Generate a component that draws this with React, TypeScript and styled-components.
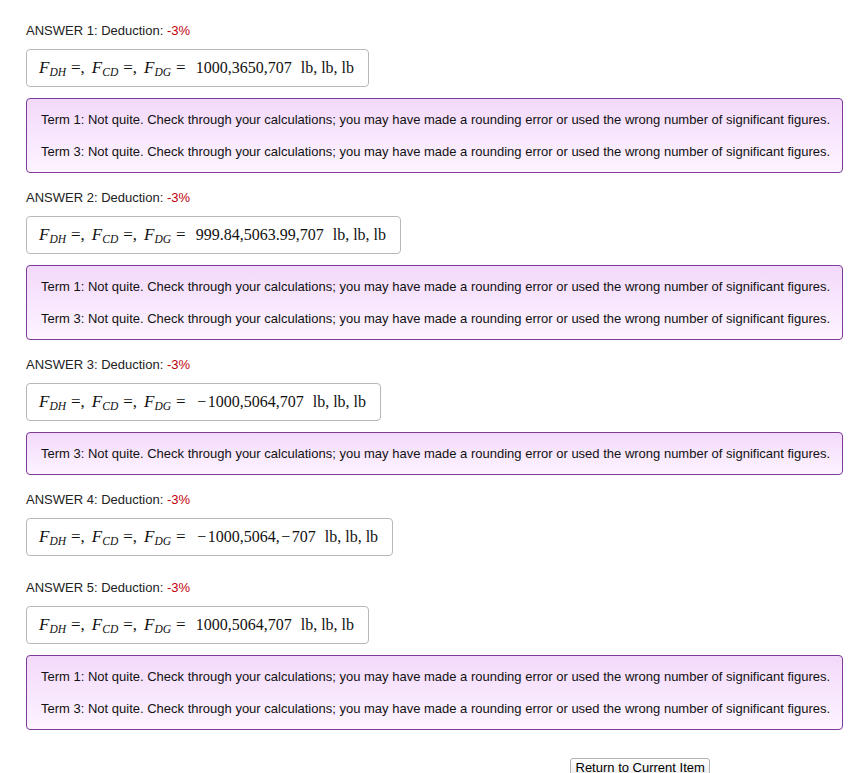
import React from "react";
import styled, { createGlobalStyle } from "styled-components";

type Answer = {
  id: number;
  value: React.ReactNode;
  terms: number[];
};

const Global = createGlobalStyle`
  body {
    margin: 0;
    background: #ffffff;
    font-family: "Liberation Sans", Arial, sans-serif;
  }
`;

const Page = styled.div`
  padding: 23px 18px 0 26px;
  display: flex;
  flex-direction: column;
  gap: 13px;
`;

const Block = styled.section`
  display: flex;
  flex-direction: column;
  align-items: flex-start;
`;

const Label = styled.div`
  font-size: 13px;
  line-height: 16px;
  color: #222;
  margin-bottom: 10px;
`;

const Deduction = styled.span`
  color: #c0000b;
`;

const AnswerBox = styled.div`
  border: 1px solid #b8b8b8;
  border-radius: 4px;
  padding: 8px 14px 8px 12px;
  margin-bottom: 11px;
  font-family: "Liberation Serif", "DejaVu Serif", serif;
  font-size: 17px;
  line-height: 20px;
  height: 20px;
  color: #111;
  white-space: nowrap;
`;

const Var = styled.span`
  font-style: italic;
`;

const Sub = styled.sub`
  font-size: 11.5px;
  font-style: italic;
  vertical-align: -3px;
  line-height: 0;
`;

const Op = styled.span`
  margin-left: 5px;
`;

const Sep = styled.span`
  margin-right: 7px;
`;

const Value = styled.span`
  font-size: 16px;
  margin-left: 10px;
`;

const Minus = styled.span`
  margin: 0 1.5px;
`;

const Unit = styled.span`
  font-size: 16px;
  margin-left: 9px;
`;

const Feedback = styled.div`
  align-self: stretch;
  display: flex;
  flex-direction: column;
  gap: 14px;
  padding: 12px 12px 11px 14px;
  margin-bottom: 4px;
  border: 1px solid #7d3c98;
  border-radius: 4px;
  background: linear-gradient(#f3d9fb, #fdf4ff);
  font-size: 13px;
  line-height: 18px;
  color: #111;
  white-space: nowrap;
`;

const Footer = styled.div`
  display: flex;
  padding: 24px 0 0 570px;
`;

const ReturnButton = styled.button`
  font-family: "Liberation Sans", Arial, sans-serif;
  font-size: 13px;
  line-height: 17px;
  padding: 0 4.5px;
  color: #000;
  background: linear-gradient(#ffffff, #ededed);
  border: 1px solid #b4b4b4;
  border-radius: 3px;
`;

const Neg = () => <Minus>&minus;</Minus>;

const Term = ({ sub, last }: { sub: string; last?: boolean }) => (
  <>
    <Var>F</Var>
    <Sub>{sub}</Sub>
    <Op>=</Op>
    {!last && <Sep>,</Sep>}
  </>
);

const Expr = ({ v }: { v: React.ReactNode }) => (
  <>
    <Term sub="DH" />
    <Term sub="CD" />
    <Term sub="DG" last />
    <Value>{v}</Value>
    <Unit>lb, lb, lb</Unit>
  </>
);

const answers: Answer[] = [
  { id: 1, value: "1000,3650,707", terms: [1, 3] },
  { id: 2, value: "999.84,5063.99,707", terms: [1, 3] },
  {
    id: 3,
    value: (
      <>
        <Neg />
        1000,5064,707
      </>
    ),
    terms: [3],
  },
  {
    id: 4,
    value: (
      <>
        <Neg />
        1000,5064,
        <Neg />
        707
      </>
    ),
    terms: [],
  },
  { id: 5, value: "1000,5064,707", terms: [1, 3] },
];

const message =
  "Not quite. Check through your calculations; you may have made a rounding error or used the wrong number of significant figures.";

export default function App() {
  return (
    <>
      <Global />
      <Page>
        {answers.map((a) => (
          <Block key={a.id}>
            <Label>
              ANSWER {a.id}: Deduction: <Deduction>-3%</Deduction>
            </Label>
            <AnswerBox>
              <Expr v={a.value} />
            </AnswerBox>
            {a.terms.length > 0 && (
              <Feedback>
                {a.terms.map((t) => (
                  <div key={t}>
                    Term {t}: {message}
                  </div>
                ))}
              </Feedback>
            )}
          </Block>
        ))}
      </Page>
      <Footer>
        <ReturnButton>Return to Current Item</ReturnButton>
      </Footer>
    </>
  );
}
